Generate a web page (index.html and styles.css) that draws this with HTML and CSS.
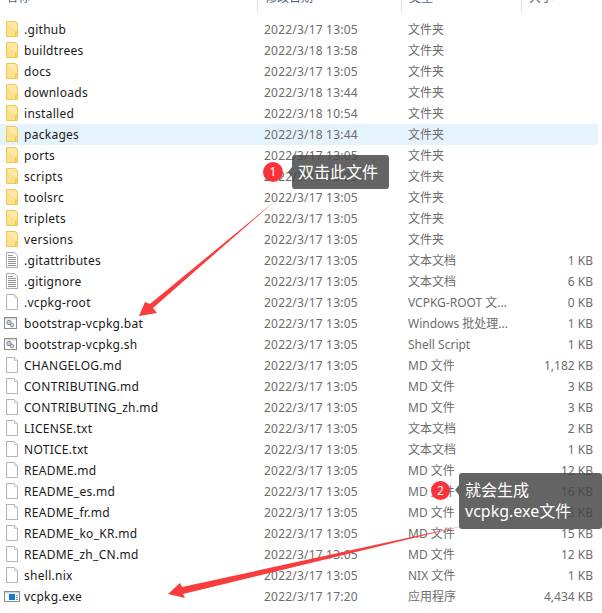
FILE: index.html
```html
<!DOCTYPE html>
<html lang="zh-CN">
<head>
<meta charset="utf-8">
<title>vcpkg</title>
<link rel="stylesheet" href="styles.css">
</head>
<body>
<svg class="defs" width="0" height="0" aria-hidden="true">
  <symbol id="folder" viewBox="0 0 14 16">
    <path d="M1.5.5H10.5L12.5 2.5V15.5H1.5Z" fill="#fde08c" stroke="#eec850"/>
    <path d="M2 1H10V3H12V9C8 9 4 6 2 1Z" fill="#fff0c0" opacity=".55"/>
    <path d="M10.5 15.5V11H12.5V15.5" fill="#f6d774" stroke="#eec850"/>
  </symbol>
  <symbol id="text" viewBox="0 0 14 16">
    <path d="M1.5.5H9.5L12.5 3.5V15.5H1.5Z" fill="#fff" stroke="#a8a8a8"/>
    <path d="M3 3.5H8M3 5.5H11M3 7.5H11M3 9.5H11M3 11.5H11M3 13.5H11" stroke="#8f8f8f"/>
  </symbol>
  <symbol id="blank" viewBox="0 0 14 16">
    <path d="M1.5.5H9.5L12.5 3.5V15.5H1.5Z" fill="#fff" stroke="#b4b4b4"/>
    <path d="M9.5.5V3.5H12.5" fill="#f0f0f0" stroke="#c8c8c8"/>
  </symbol>
  <symbol id="script" viewBox="0 0 13 12">
    <rect x=".5" y=".5" width="12" height="11" fill="#fff" stroke="#8b8b8b"/>
    <rect x="1" y="1" width="11" height="1.5" fill="#d8d8d8"/>
    <circle cx="5" cy="5.5" r="2.2" fill="#c4cdd6" stroke="#7f8a96"/>
    <circle cx="8" cy="8" r="1.8" fill="#d5dbe1" stroke="#8a95a0"/>
  </symbol>
  <symbol id="exe" viewBox="0 0 16 11">
    <rect x=".5" y=".5" width="15" height="10" fill="#fff" stroke="#8b8b8b"/>
    <rect x="1" y="1" width="14" height="1.5" fill="#cfd6dc"/>
    <rect x="5" y="3" width="6" height="6" fill="#0f7bd8"/>
    <path d="M12 4.5H14M12 6.5H14M12 8.5H14" stroke="#9a9a9a"/>
  </symbol>
</svg>

<main class="explorer">
  <div class="header">
    <div class="hcell"><span class="hlabel">名称</span></div>
    <div class="hcell"><span class="hlabel">修改日期</span></div>
    <div class="hcell"><span class="hlabel">类型</span></div>
    <div class="hcell"><span class="hlabel">大小</span></div>
  </div>
  <div class="list">
    <div class="row"><svg class="ico"><use href="#folder"/></svg><span class="name">.github</span><span class="date">2022/3/17 13:05</span><span class="type">文件夹</span><span class="size"></span></div>
    <div class="row"><svg class="ico"><use href="#folder"/></svg><span class="name">buildtrees</span><span class="date">2022/3/18 13:58</span><span class="type">文件夹</span><span class="size"></span></div>
    <div class="row"><svg class="ico"><use href="#folder"/></svg><span class="name">docs</span><span class="date">2022/3/17 13:05</span><span class="type">文件夹</span><span class="size"></span></div>
    <div class="row"><svg class="ico"><use href="#folder"/></svg><span class="name">downloads</span><span class="date">2022/3/18 13:44</span><span class="type">文件夹</span><span class="size"></span></div>
    <div class="row"><svg class="ico"><use href="#folder"/></svg><span class="name">installed</span><span class="date">2022/3/18 10:54</span><span class="type">文件夹</span><span class="size"></span></div>
    <div class="row hover"><svg class="ico"><use href="#folder"/></svg><span class="name">packages</span><span class="date">2022/3/18 13:44</span><span class="type">文件夹</span><span class="size"></span></div>
    <div class="row"><svg class="ico"><use href="#folder"/></svg><span class="name">ports</span><span class="date">2022/3/17 13:05</span><span class="type">文件夹</span><span class="size"></span></div>
    <div class="row"><svg class="ico"><use href="#folder"/></svg><span class="name">scripts</span><span class="date">2022/3/17 13:05</span><span class="type">文件夹</span><span class="size"></span></div>
    <div class="row"><svg class="ico"><use href="#folder"/></svg><span class="name">toolsrc</span><span class="date">2022/3/17 13:05</span><span class="type">文件夹</span><span class="size"></span></div>
    <div class="row"><svg class="ico"><use href="#folder"/></svg><span class="name">triplets</span><span class="date">2022/3/17 13:05</span><span class="type">文件夹</span><span class="size"></span></div>
    <div class="row"><svg class="ico"><use href="#folder"/></svg><span class="name">versions</span><span class="date">2022/3/17 13:05</span><span class="type">文件夹</span><span class="size"></span></div>
    <div class="row"><svg class="ico"><use href="#text"/></svg><span class="name">.gitattributes</span><span class="date">2022/3/17 13:05</span><span class="type">文本文档</span><span class="size">1 KB</span></div>
    <div class="row"><svg class="ico"><use href="#text"/></svg><span class="name">.gitignore</span><span class="date">2022/3/17 13:05</span><span class="type">文本文档</span><span class="size">6 KB</span></div>
    <div class="row"><svg class="ico"><use href="#blank"/></svg><span class="name">.vcpkg-root</span><span class="date">2022/3/17 13:05</span><span class="type">VCPKG-ROOT 文...</span><span class="size">0 KB</span></div>
    <div class="row"><svg class="ico ico-script"><use href="#script"/></svg><span class="name">bootstrap-vcpkg.bat</span><span class="date">2022/3/17 13:05</span><span class="type">Windows 批处理...</span><span class="size">1 KB</span></div>
    <div class="row"><svg class="ico ico-script"><use href="#script"/></svg><span class="name">bootstrap-vcpkg.sh</span><span class="date">2022/3/17 13:05</span><span class="type">Shell Script</span><span class="size">1 KB</span></div>
    <div class="row"><svg class="ico"><use href="#blank"/></svg><span class="name">CHANGELOG.md</span><span class="date">2022/3/17 13:05</span><span class="type">MD 文件</span><span class="size">1,182 KB</span></div>
    <div class="row"><svg class="ico"><use href="#blank"/></svg><span class="name">CONTRIBUTING.md</span><span class="date">2022/3/17 13:05</span><span class="type">MD 文件</span><span class="size">3 KB</span></div>
    <div class="row"><svg class="ico"><use href="#blank"/></svg><span class="name">CONTRIBUTING_zh.md</span><span class="date">2022/3/17 13:05</span><span class="type">MD 文件</span><span class="size">3 KB</span></div>
    <div class="row"><svg class="ico"><use href="#blank"/></svg><span class="name">LICENSE.txt</span><span class="date">2022/3/17 13:05</span><span class="type">文本文档</span><span class="size">2 KB</span></div>
    <div class="row"><svg class="ico"><use href="#blank"/></svg><span class="name">NOTICE.txt</span><span class="date">2022/3/17 13:05</span><span class="type">文本文档</span><span class="size">1 KB</span></div>
    <div class="row"><svg class="ico"><use href="#blank"/></svg><span class="name">README.md</span><span class="date">2022/3/17 13:05</span><span class="type">MD 文件</span><span class="size">12 KB</span></div>
    <div class="row"><svg class="ico"><use href="#blank"/></svg><span class="name">README_es.md</span><span class="date">2022/3/17 13:05</span><span class="type">MD 文件</span><span class="size">16 KB</span></div>
    <div class="row"><svg class="ico"><use href="#blank"/></svg><span class="name">README_fr.md</span><span class="date">2022/3/17 13:05</span><span class="type">MD 文件</span><span class="size">15 KB</span></div>
    <div class="row"><svg class="ico"><use href="#blank"/></svg><span class="name">README_ko_KR.md</span><span class="date">2022/3/17 13:05</span><span class="type">MD 文件</span><span class="size">15 KB</span></div>
    <div class="row"><svg class="ico"><use href="#blank"/></svg><span class="name">README_zh_CN.md</span><span class="date">2022/3/17 13:05</span><span class="type">MD 文件</span><span class="size">12 KB</span></div>
    <div class="row"><svg class="ico"><use href="#blank"/></svg><span class="name">shell.nix</span><span class="date">2022/3/17 13:05</span><span class="type">NIX 文件</span><span class="size">1 KB</span></div>
    <div class="row"><svg class="ico ico-exe"><use href="#exe"/></svg><span class="name">vcpkg.exe</span><span class="date">2022/3/17 17:20</span><span class="type">应用程序</span><span class="size">4,434 KB</span></div>
  </div>

  <svg class="arrows" viewBox="0 0 602 613" aria-hidden="true">
    <path d="M275 201 L153 308 L157 313 L139 316 L145 302 L150 304 Z" fill="#f93c3c"/>
    <path d="M467 525 L182 587 L180 583 L168 594 L185 598 L183 594 Z" fill="#f93c3c"/>
  </svg>

  <div class="tip tip-one">双击此文件</div>
  <div class="tip tip-two">就会生成<br>vcpkg.exe文件</div>
  <span class="badge badge-one">1</span>
  <span class="badge badge-two">2</span>
</main>
</body>
</html>
```
FILE: styles.css
```css
* { box-sizing: border-box; }
html, body { margin: 0; background: #fff; }
body {
  width: 602px;
  height: 613px;
  overflow: hidden;
  font: 12px/21px "Noto Sans", "Noto Sans CJK SC", sans-serif;
}
.defs { position: absolute; }
.explorer { position: relative; width: 602px; height: 613px; overflow: hidden; }

.header {
  display: grid;
  grid-template-columns: 257px 144px 120px 81px;
  height: 12px;
  margin-bottom: 7px;
}
.hcell {
  height: 12px;
  padding-left: 7px;
  border-left: 1px solid #e5e5e5;
}
.hcell:first-child { padding-left: 6px; border-left: 0; }
.hlabel {
  display: block;
  margin-top: -8px;
  line-height: 12px;
  color: #4c607a;
}

.row {
  display: grid;
  grid-template-columns: 24px 240px 144px 108px 77px;
  align-items: center;
  width: 598px;
  height: 21px;
  color: #6d6d6d;
}
.row.hover { background: #e5f3fd; }
.ico { align-self: start; width: 14px; height: 16px; margin: 2px 0 0 5px; }
.ico-script { width: 13px; height: 12px; margin: 4px 0 0 4px; }
.ico-exe { width: 16px; height: 11px; margin: 5px 0 0 4px; }
.name { color: #1a1a1a; white-space: nowrap; letter-spacing: .28px; }
.date { white-space: nowrap; letter-spacing: .2px; }
.type { white-space: nowrap; }
.size { text-align: right; white-space: nowrap; }

.arrows { position: absolute; left: 0; top: 0; width: 602px; height: 613px; }

.tip {
  position: absolute;
  background: rgba(70, 70, 70, .84);
  color: #fff;
  border-radius: 3px;
  font-size: 16px;
}
.tip::before {
  content: "";
  position: absolute;
  left: -4px;
  border: 5px solid transparent;
  border-left: 0;
  border-right-color: rgba(70, 70, 70, .84);
  border-right-width: 4px;
}
.tip-one { left: 292px; top: 155px; width: 97px; height: 34px; padding-left: 6px; line-height: 34px; }
.tip-one::before { top: 12px; }
.tip-two { left: 459px; top: 473px; width: 143px; height: 56px; padding: 7px 0 0 6px; line-height: 21px; }
.tip-two::before { top: 12px; }

.badge {
  position: absolute;
  width: 20px;
  height: 20px;
  border-radius: 50%;
  background: #fa3239;
  color: #fff;
  font-size: 12px;
  line-height: 20px;
  text-align: center;
}
.badge-one { left: 263px; top: 162px; }
.badge-two { left: 431px; top: 481px; width: 19px; height: 19px; line-height: 19px; }
```
